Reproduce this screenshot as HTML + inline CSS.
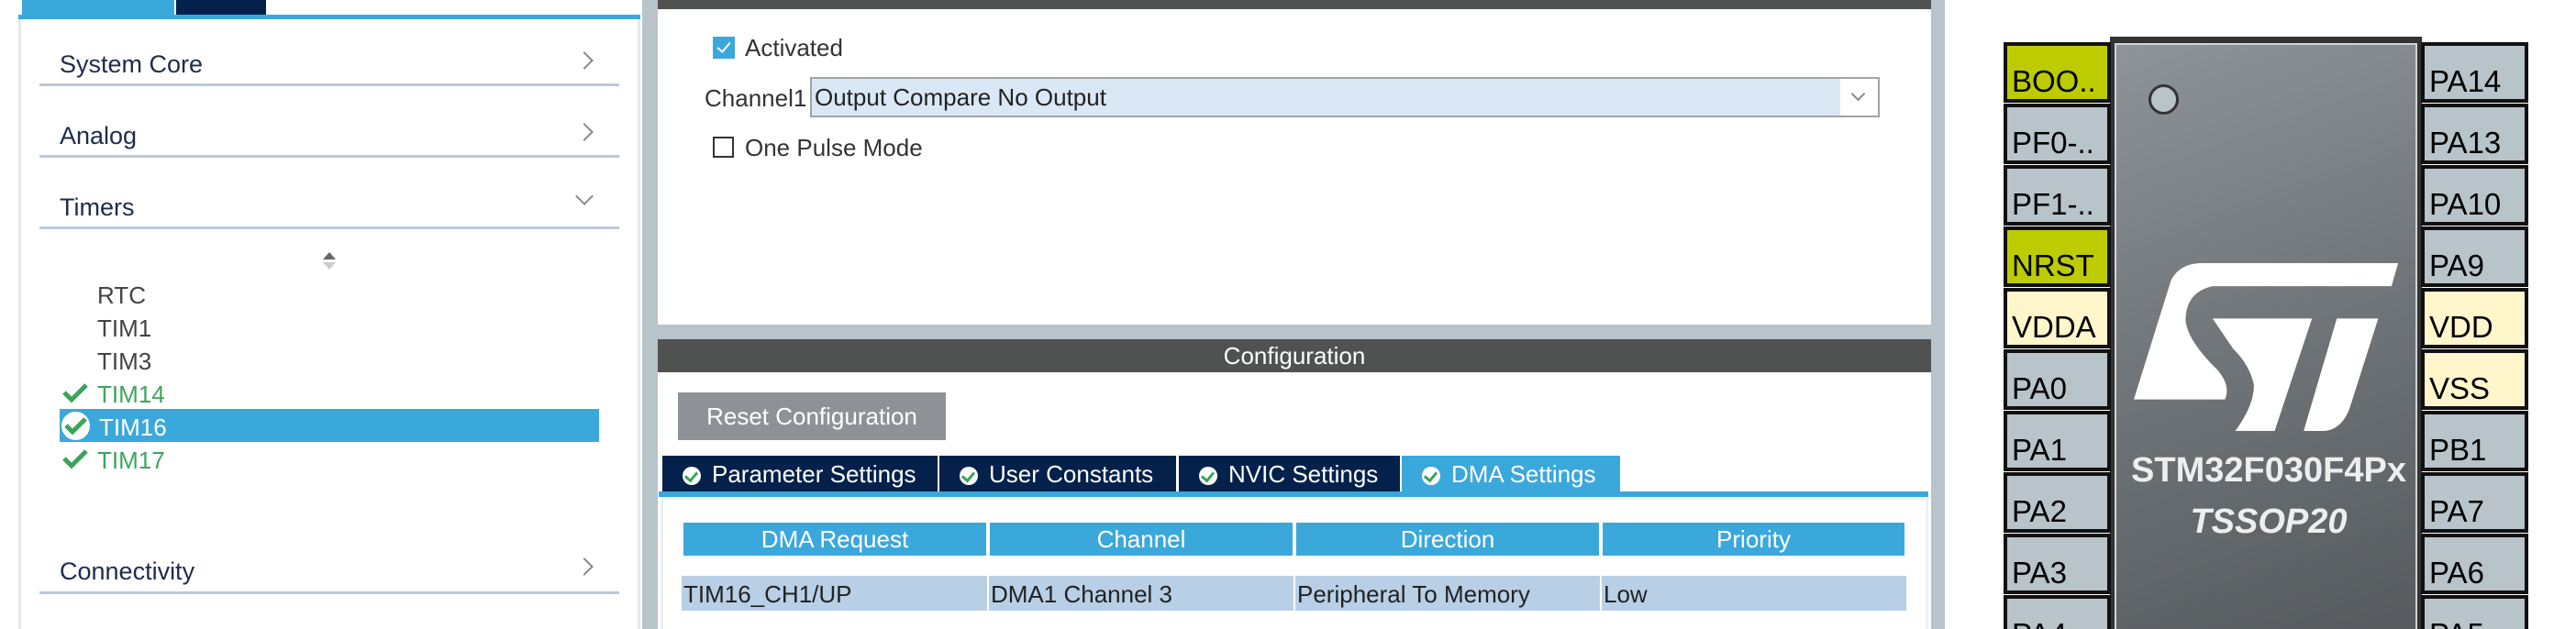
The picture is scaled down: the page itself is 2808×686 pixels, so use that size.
<!DOCTYPE html>
<html><head><meta charset="utf-8"><style>
*{margin:0;padding:0;box-sizing:border-box}
html,body{width:2808px;height:686px;overflow:hidden}
body{background:#fff;font-family:"Liberation Sans",Arial,sans-serif;position:relative}
#w{position:absolute;left:0;top:0;width:2808px;height:686px;overflow:hidden}
.a{position:absolute}
.t{position:absolute;white-space:nowrap;line-height:1}
.cat{font-size:27px;color:#1f2b4d}
.div{position:absolute;left:43px;width:632px;height:3px;background:#bcc8d8}
.chev{position:absolute;left:630px;width:14px;height:14px;border-right:2px solid #888;border-top:2px solid #888;transform:rotate(45deg)}
.li{font-size:26px;color:#444}
.gr{color:#3da65c}
.pin{position:absolute;width:117px;height:66px;border:4px solid #111;background:#b8c3ca;font-size:33px;color:#000;padding:22px 0 0 5px;line-height:1}
.tab{position:absolute;top:497px;height:40px;background:#03214a;color:#fff;font-size:26px;line-height:40px;white-space:nowrap}
.tab i{display:inline-block;width:20px;height:20px;border-radius:50%;background:#fff;vertical-align:-3px;margin:0 12px 0 22px;position:relative}
.tab i:after{content:"";position:absolute;left:5px;top:3px;width:6px;height:10px;border:solid #3aa55a;border-width:0 3px 3px 0;transform:rotate(40deg)}
.th{position:absolute;top:570px;height:36px;background:#3ba8dc;color:#fff;font-size:26px;text-align:center;line-height:36px}
.td{position:absolute;top:628px;height:38px;background:#b8cfe6;color:#222;font-size:26px;line-height:40px;padding-left:2px;white-space:nowrap}
</style></head><body><div id="w">
<!-- left panel -->
<div class="a" style="left:20px;top:20px;width:678px;height:666px;background:#fff;border-left:3px solid #e8e8e8;border-right:3px solid #e8e8e8"></div>
<div class="a" style="left:24px;top:0;width:166px;height:16px;background:#3ba8dc"></div>
<div class="a" style="left:192px;top:0;width:98px;height:16px;background:#03214a"></div>
<div class="a" style="left:20px;top:16px;width:678px;height:5px;background:#3ba8dc"></div>
<div class="a" style="left:700px;top:0;width:20px;height:686px;background:#b8c3ca"></div>
<div class="t cat" style="left:65px;top:57px">System Core</div>
<div class="chev" style="top:59px"></div>
<div class="div" style="top:91px"></div>
<div class="t cat" style="left:65px;top:135px">Analog</div>
<div class="chev" style="top:137px"></div>
<div class="div" style="top:169px"></div>
<div class="t cat" style="left:65px;top:213px">Timers</div>
<div class="a" style="left:630px;top:207px;width:14px;height:14px;border-right:2px solid #888;border-bottom:2px solid #888;transform:rotate(45deg)"></div>
<div class="div" style="top:247px"></div>
<div class="a" style="left:352px;top:275px;width:0;height:0;border:7px solid transparent;border-bottom:8px solid #666;border-top:0"></div>
<div class="a" style="left:352px;top:286px;width:0;height:0;border:7px solid transparent;border-top:8px solid #ccc;border-bottom:0"></div>
<div class="t li" style="left:106px;top:309px">RTC</div>
<div class="t li" style="left:106px;top:345px">TIM1</div>
<div class="t li" style="left:106px;top:381px">TIM3</div>
<div class="t li gr" style="left:106px;top:417px">TIM14</div>
<div class="a" style="left:65px;top:446px;width:588px;height:36px;background:#3ba8dc"></div>
<div class="a" style="left:67px;top:449px;width:31px;height:31px;border-radius:50%;background:#fff"></div>
<div class="t li" style="left:108px;top:453px;color:#fff">TIM16</div>
<div class="t li gr" style="left:106px;top:489px">TIM17</div>
<svg class="a" style="left:66px;top:414px" width="34" height="110" viewBox="0 0 34 110">
<path d="M4 14l8 8 16-16" fill="none" stroke="#3aa55a" stroke-width="5"/>
<path d="M6 50l7 7 14-14" fill="none" stroke="#3aa55a" stroke-width="5"/>
<path d="M4 86l8 8 16-16" fill="none" stroke="#3aa55a" stroke-width="5"/>
</svg>
<div class="t cat" style="left:65px;top:610px">Connectivity</div>
<div class="chev" style="top:611px"></div>
<div class="div" style="top:645px"></div>

<!-- middle -->
<div class="a" style="left:717px;top:0;width:1388px;height:686px;background:#fff"></div>
<div class="a" style="left:717px;top:0;width:1388px;height:10px;background:#505251"></div>
<div class="a" style="left:717px;top:354px;width:1388px;height:16px;background:#b8c3ca"></div>
<div class="a" style="left:2105px;top:0;width:15px;height:686px;background:#b8c3ca"></div>
<div class="a" style="left:777px;top:40px;width:24px;height:24px;background:#3ba8dc"></div>
<div class="a" style="left:785px;top:43px;width:8px;height:14px;border:solid #fff;border-width:0 2px 2px 0;transform:rotate(40deg)"></div>
<div class="t" style="left:812px;top:39px;font-size:26px;color:#333">Activated</div>
<div class="t" style="left:768px;top:94px;font-size:26px;color:#333">Channel1</div>
<div class="a" style="left:883px;top:84px;width:1166px;height:44px;border:2px solid #a0a4a8;background:#dae8f5"></div>
<div class="a" style="left:2006px;top:86px;width:41px;height:40px;background:#fff"></div>
<div class="a" style="left:2020px;top:97px;width:11px;height:11px;border-right:2px solid #888;border-bottom:2px solid #888;transform:rotate(45deg)"></div>
<div class="t" style="left:888px;top:93px;font-size:26px;color:#222">Output Compare No Output</div>
<div class="a" style="left:777px;top:149px;width:23px;height:23px;border:2px solid #333;background:#fff"></div>
<div class="t" style="left:812px;top:148px;font-size:26px;color:#333">One Pulse Mode</div>
<div class="a" style="left:717px;top:370px;width:1388px;height:36px;background:#505251"></div>
<div class="t" style="left:717px;top:375px;width:1388px;text-align:center;font-size:26px;color:#fff">Configuration</div>
<div class="a" style="left:739px;top:428px;width:292px;height:52px;background:#8e9296"></div>
<div class="t" style="left:739px;top:441px;width:292px;text-align:center;font-size:26px;color:#fff">Reset Configuration</div>
<div class="tab" style="left:722px;width:300px"><i></i>Parameter Settings</div>
<div class="tab" style="left:1024px;width:258px"><i></i>User Constants</div>
<div class="tab" style="left:1285px;width:241px"><i></i>NVIC Settings</div>
<div class="tab" style="left:1528px;width:238px;background:#3ba8dc"><i></i>DMA Settings</div>
<div class="a" style="left:718px;top:536px;width:1384px;height:6px;background:#3ba8dc"></div>
<div class="a" style="left:720px;top:542px;width:1382px;height:144px;border:3px solid #eef0f2;border-bottom:0"></div>
<div class="th" style="left:745px;width:330px">DMA Request</div>
<div class="th" style="left:1079px;width:330px">Channel</div>
<div class="th" style="left:1413px;width:330px">Direction</div>
<div class="th" style="left:1747px;width:329px">Priority</div>
<div class="td" style="left:743px;width:333px">TIM16_CH1/UP</div>
<div class="td" style="left:1078px;width:332px">DMA1 Channel 3</div>
<div class="td" style="left:1412px;width:332px">Peripheral To Memory</div>
<div class="td" style="left:1746px;width:332px">Low</div>

<!-- chip -->
<div class="a" style="left:2300px;top:40px;width:340px;height:660px;background:#333;"></div>
<div class="a" style="left:2305px;top:47px;width:330px;height:650px;background:linear-gradient(160deg,#8d949a 0%,#72777b 45%,#565a5d 100%);border:2px solid #d0d4d8;border-bottom:0"></div>
<div class="a" style="left:2342px;top:92px;width:33px;height:33px;border-radius:50%;background:#b8c3ca;border:3px solid #333"></div>
<svg class="a" style="left:2326px;top:287px" width="289" height="183" viewBox="500 658 640 415" preserveAspectRatio="none">
<path fill="#fff" d="M500 995L590 700Q610 660 660 658L1138 658L1122 715L690 715Q625 730 625 800Q630 850 700 920Q735 960 720 995Z"/>
<path fill="#fff" d="M690 795L930 795L840 1073L745 1073Q790 1010 790 960Q780 910 740 870Z"/>
<path fill="#fff" d="M990 795L1090 795L1020 1020Q1000 1070 960 1073L910 1073Z"/>
</svg>
<div class="t" style="left:2300px;top:494px;width:346px;text-align:center;font-size:38px;font-weight:bold;color:#eee">STM32F030F4Px</div>
<div class="t" style="left:2300px;top:550px;width:346px;text-align:center;font-size:38px;font-weight:bold;font-style:italic;color:#eee">TSSOP20</div>

<div class="pin" style="left:2184px;top:46px;background:#bccc00">BOO..</div>
<div class="pin" style="left:2184px;top:113px">PF0-..</div>
<div class="pin" style="left:2184px;top:180px">PF1-..</div>
<div class="pin" style="left:2184px;top:247px;background:#bccc00">NRST</div>
<div class="pin" style="left:2184px;top:314px;background:#fff6cc">VDDA</div>
<div class="pin" style="left:2184px;top:381px">PA0</div>
<div class="pin" style="left:2184px;top:448px">PA1</div>
<div class="pin" style="left:2184px;top:515px">PA2</div>
<div class="pin" style="left:2184px;top:582px">PA3</div>
<div class="pin" style="left:2184px;top:649px">PA4</div>
<div class="pin" style="left:2639px;top:46px">PA14</div>
<div class="pin" style="left:2639px;top:113px">PA13</div>
<div class="pin" style="left:2639px;top:180px">PA10</div>
<div class="pin" style="left:2639px;top:247px">PA9</div>
<div class="pin" style="left:2639px;top:314px;background:#fff6cc">VDD</div>
<div class="pin" style="left:2639px;top:381px;background:#fff6cc">VSS</div>
<div class="pin" style="left:2639px;top:448px">PB1</div>
<div class="pin" style="left:2639px;top:515px">PA7</div>
<div class="pin" style="left:2639px;top:582px">PA6</div>
<div class="pin" style="left:2639px;top:649px">PA5</div>
</div></body></html>
